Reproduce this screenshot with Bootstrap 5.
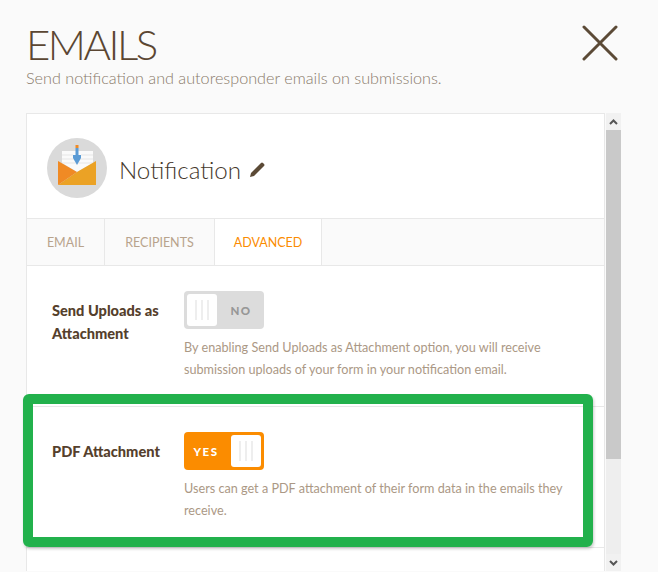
<!DOCTYPE html>
<html lang="en">
<head>
  <meta charset="UTF-8">
  <meta name="viewport" content="width=device-width, initial-scale=1.0">
  <title>Emails</title>
  <link href="https://cdn.jsdelivr.net/npm/bootstrap@5.3.0/dist/css/bootstrap.min.css" rel="stylesheet">
  <style>
    html, body { height: 100%; overflow: hidden; }
    body { background: #fafafa; font-family: "Lato", "Liberation Sans", sans-serif; color: #5b4632; }
    .wizard { width: 621px; margin-left: 26px; height: 571px; position: relative; }
    .wizard-head { height: 113px; padding-top: 20px; }
    .wizard-title { font-size: 42px; font-weight: 300; line-height: 49px; margin: 0; letter-spacing: -2.5px; }
    .wizard-sub { font-size: 16.2px; font-weight: 300; line-height: 17px; color: #8a7a6b; }
    .close-x { width: 36px; height: 36px; margin-right: 29px; margin-top: 5px; }
    .panel-wrap { height: 458px; }
    .panel-box { width: 579px; background: #fff; border: 1px solid #e8e8e8; border-bottom: 0; }
    .panel-title { height: 104px; padding: 4px 0 0 20px; gap: 12px; }
    .panel-name { font-size: 24.2px; font-weight: 300; color: #45382b; padding-top: 4px; }
    .tab-bar { background: #fafafa; border-top: 1px solid #e8e8e8; border-bottom: 1px solid #e8e8e8; height: 48px; }
    .tab-item { font-size: 12.5px; line-height: 48px; text-align: center; color: #b8a38c; border-right: 1px solid #e8e8e8; }
    .tab-item.active { background: #fff; color: #fb8c00; }
    .opt-row { padding: 25px 20px 0 25px; height: 141px; border-bottom: 1px solid #e8e8e8; }
    .opt-label { width: 132px; font-size: 14.6px; font-weight: 900; line-height: 23px; padding-top: 8px; color: #55402c; }
    .opt-body { width: 396px; }
    .opt-desc { font-size: 12.65px; line-height: 22px; color: #ab9885; margin-top: 8px; }
    .toggle-sw { width: 80px; height: 38px; border-radius: 4px; padding: 3px; font-size: 11.5px; font-weight: 900; letter-spacing: 1.5px; }
    .toggle-sw.off { background: #dcdcdc; color: #979797; }
    .toggle-sw.on { background: #fb8c00; color: #fff; }
    .toggle-knob { width: 30px; height: 32px; background: #fff; border-radius: 3px; gap: 4px; }
    .toggle-knob i { display: block; width: 2px; height: 20px; background: #eee; }
    .toggle-text { flex: 1; text-align: center; padding-top: 2px; }
    .off .toggle-text { padding-left: 4px; }
    .on .toggle-text { padding-right: 6px; }
    .fake-scroll { width: 15px; margin-left: 1px; background: #eee; }
    .scroll-btn { height: 17px; background: #f1f1f1; }
    .scroll-thumb { height: 329px; background: #c9c9c9; }
    .green-mark { position: absolute; left: -3px; top: 394px; width: 570px; height: 153px; border: 10px solid #22b14c; border-radius: 6px; box-shadow: 1px 2px 3px rgba(0,0,0,.2); }
  </style>
</head>
<body>
  <div class="wizard">
    <div class="wizard-head d-flex justify-content-between align-items-start">
      <div>
        <h1 class="wizard-title">EMAILS</h1>
        <div class="wizard-sub">Send notification and autoresponder emails on submissions.</div>
      </div>
      <svg class="close-x" viewBox="0 0 36 36"><path d="M2 2 L34 34 M34 2 L2 34" stroke="#5b4a36" stroke-width="3" stroke-linecap="round" fill="none"/></svg>
    </div>
    <div class="panel-wrap d-flex">
      <div class="panel-box">
        <div class="panel-title d-flex align-items-center">
          <svg width="60" height="60" viewBox="0 0 60 60">
            <circle cx="30" cy="30" r="30" fill="#dadada"/>
            <path d="M15 13 H46 V25 L30 34 L15 25 Z" fill="#fafafa"/>
            <path d="M15 17 H26 M34 17 H46 M15 21 H46 M15 25 H46" stroke="#e6e6e6" stroke-width="1"/>
            <rect x="28.5" y="7" width="3" height="3" fill="#f08a24"/>
            <rect x="28.5" y="10" width="3" height="9" fill="#5b9bd5"/>
            <path d="M26 17 H34 V20 L30 27 L26 20 Z" fill="#5b9bd5"/>
            <path d="M49 23 L30 34 L11 47 H49 Z" fill="#eba225"/>
            <path d="M11 23 L30 34 L11 47 Z" fill="#f08a24"/>
          </svg>
          <div class="d-flex align-items-center gap-2">
            <span class="panel-name">Notification</span>
            <svg width="17" height="17" viewBox="0 0 17 17" style="margin-top:4px"><path d="M1 16 L2 12 L12 2 Q13 1 14 2 L15 3 Q16 4 15 5 L5 15 Z" fill="#5b4a36"/></svg>
          </div>
        </div>
        <div class="tab-bar d-flex">
          <div class="tab-item" style="width:78px">EMAIL</div>
          <div class="tab-item" style="width:110px">RECIPIENTS</div>
          <div class="tab-item active" style="width:107px">ADVANCED</div>
        </div>
        <div class="opt-row d-flex">
          <div class="opt-label">Send Uploads as Attachment</div>
          <div class="opt-body">
            <div class="toggle-sw off d-flex align-items-center">
              <span class="toggle-knob d-flex align-items-center justify-content-center"><i></i><i></i><i></i></span>
              <span class="toggle-text">NO</span>
            </div>
            <div class="opt-desc">By enabling Send Uploads as Attachment option, you will receive submission uploads of your form in your notification email.</div>
          </div>
        </div>
        <div class="opt-row d-flex">
          <div class="opt-label">PDF Attachment</div>
          <div class="opt-body">
            <div class="toggle-sw on d-flex align-items-center">
              <span class="toggle-text">YES</span>
              <span class="toggle-knob d-flex align-items-center justify-content-center"><i></i><i></i><i></i></span>
            </div>
            <div class="opt-desc">Users can get a PDF attachment of their form data in the emails they receive.</div>
          </div>
        </div>
      </div>
      <div class="fake-scroll d-flex flex-column">
        <div class="scroll-btn d-flex align-items-center justify-content-center">
          <svg width="9" height="6" viewBox="0 0 9 6"><path d="M1 5 L4.5 1.5 L8 5" stroke="#555" stroke-width="2" fill="none"/></svg>
        </div>
        <div class="scroll-thumb"></div>
        <div class="flex-grow-1"></div>
        <div class="scroll-btn d-flex align-items-center justify-content-center">
          <svg width="9" height="6" viewBox="0 0 9 6"><path d="M1 1 L4.5 4.5 L8 1" stroke="#555" stroke-width="2" fill="none"/></svg>
        </div>
      </div>
    </div>
    <div class="green-mark"></div>
  </div>
  <script src="https://cdn.jsdelivr.net/npm/bootstrap@5.3.0/dist/js/bootstrap.bundle.min.js"></script>
</body>
</html>
